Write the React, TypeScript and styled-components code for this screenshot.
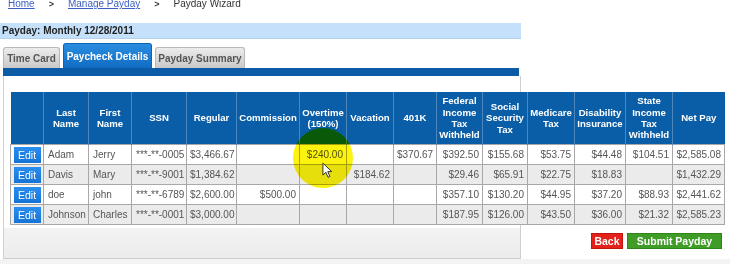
import React from "react";
import styled, { createGlobalStyle } from "styled-components";

const GlobalStyle = createGlobalStyle`
  html, body {
    margin: 0;
    padding: 0;
    background: #fff;
    font-family: "Liberation Sans", Arial, sans-serif;
  }
`;

type Row = {
  last: string;
  first: string;
  ssn: string;
  values: string[];
};

const columns = [
  { label: "", width: 33 },
  { label: "Last Name", width: 45 },
  { label: "First Name", width: 43 },
  { label: "SSN", width: 55 },
  { label: "Regular", width: 50 },
  { label: "Commission", width: 63 },
  { label: "Overtime (150%)", width: 47 },
  { label: "Vacation", width: 47 },
  { label: "401K", width: 43 },
  { label: "Federal Income Tax Withheld", width: 46 },
  { label: "Social Security Tax", width: 45 },
  { label: "Medicare Tax", width: 47 },
  { label: "Disability Insurance", width: 51 },
  { label: "State Income Tax Withheld", width: 47 },
  { label: "Net Pay", width: 52 },
];

const rows: Row[] = [
  {
    last: "Adam",
    first: "Jerry",
    ssn: "***-**-0005",
    values: ["$3,466.67", "", "$240.00", "", "$370.67", "$392.50", "$155.68", "$53.75", "$44.48", "$104.51", "$2,585.08"],
  },
  {
    last: "Davis",
    first: "Mary",
    ssn: "***-**-9001",
    values: ["$1,384.62", "", "", "$184.62", "", "$29.46", "$65.91", "$22.75", "$18.83", "", "$1,432.29"],
  },
  {
    last: "doe",
    first: "john",
    ssn: "***-**-6789",
    values: ["$2,600.00", "$500.00", "", "", "", "$357.10", "$130.20", "$44.95", "$37.20", "$88.93", "$2,441.62"],
  },
  {
    last: "Johnson",
    first: "Charles",
    ssn: "***-**-0001",
    values: ["$3,000.00", "", "", "", "", "$187.95", "$126.00", "$43.50", "$36.00", "$21.32", "$2,585.23"],
  },
];

const App = () => {
  return (
    <>
      <GlobalStyle />
      <Page>
        <Crumbs>
          <CrumbLink>Home</CrumbLink>
          <Arrow>&gt;</Arrow>
          <CrumbLink>Manage Payday</CrumbLink>
          <Arrow>&gt;</Arrow>
          <Current>Payday Wizard</Current>
        </Crumbs>

        <PaydayBar>Payday: Monthly 12/28/2011</PaydayBar>

        <Tabs>
          <Tab width={57}>Time Card</Tab>
          <Tab width={89} active>
            Paycheck Details
          </Tab>
          <Tab width={90}>Payday Summary</Tab>
        </Tabs>
        <TabLine />

        <Panel>
          <TableWrap>
            <Grid>
              <colgroup>
                {columns.map((c, i) => (
                  <col key={i} style={{ width: c.width }} />
                ))}
              </colgroup>
              <thead>
                <tr>
                  {columns.map((c, i) => (
                    <Th key={i}>{c.label}</Th>
                  ))}
                </tr>
              </thead>
              <tbody>
                {rows.map((r, i) => (
                  <Tr key={i} striped={i % 2 === 1}>
                    <EditCell>
                      <EditButton>Edit</EditButton>
                    </EditCell>
                    <Td>{r.last}</Td>
                    <Td>{r.first}</Td>
                    <Td>{r.ssn}</Td>
                    {r.values.map((v, j) => (
                      <Td key={j} money>
                        {v}
                      </Td>
                    ))}
                  </Tr>
                ))}
              </tbody>
            </Grid>
            <Highlight />
            <Cursor viewBox="0 0 12 18" width="11" height="17">
              <path
                d="M1 1 L1 14 L4.2 11 L6.6 16.4 L8.6 15.5 L6.3 10.2 L10.6 10.2 Z"
                fill="#fff"
                stroke="#222"
                strokeWidth="1"
                strokeLinejoin="round"
              />
            </Cursor>
          </TableWrap>

          <Footer>
            <ButtonRow>
              <BackButton>Back</BackButton>
              <SubmitButton>Submit Payday</SubmitButton>
            </ButtonRow>
          </Footer>
        </Panel>
        <BottomStrip />
      </Page>
    </>
  );
};

export default App;

const Page = styled.div`
  width: 730px;
  height: 264px;
  overflow: hidden;
  background: #fff;
  display: flex;
  flex-direction: column;
`;

const Crumbs = styled.div`
  display: flex;
  align-items: center;
  gap: 14px;
  height: 12px;
  margin-top: -2px;
  margin-bottom: 13px;
  padding-left: 8px;
  font-size: 10px;
  line-height: 12px;
  flex-shrink: 0;
`;

const CrumbLink = styled.span`
  color: #3c5fc4;
  text-decoration: underline;
`;

const Arrow = styled.span`
  color: #333;
  font-weight: bold;
  font-size: 9px;
`;

const Current = styled.span`
  color: #333;
`;

const PaydayBar = styled.div`
  width: 521px;
  height: 16px;
  padding-left: 2px;
  background: #c5e0fa;
  border-bottom: 1px solid #b4d2ee;
  color: #222;
  font-weight: bold;
  font-size: 10px;
  line-height: 16px;
  box-sizing: border-box;
  flex-shrink: 0;
`;

const Tabs = styled.div`
  display: flex;
  align-items: flex-end;
  gap: 3px;
  height: 25px;
  padding: 4px 0 0 3px;
  flex-shrink: 0;
`;

const Tab = styled.div<{ active?: boolean; width: number }>`
  width: ${(p) => p.width}px;
  height: ${(p) => (p.active ? "25px" : "21px")};
  display: flex;
  align-items: center;
  justify-content: center;
  white-space: nowrap;
  border-radius: 3px 3px 0 0;
  border: 1px solid ${(p) => (p.active ? "#0d64b4" : "#b8b8b8")};
  border-bottom: none;
  background: ${(p) =>
    p.active
      ? "linear-gradient(#2b8de0, #0f6cc4)"
      : "linear-gradient(#ececec, #c9c9c9)"};
  color: ${(p) => (p.active ? "#fff" : "#555")};
  font-size: 10px;
  font-weight: bold;
  box-sizing: border-box;
`;

const TabLine = styled.div`
  width: 516px;
  height: 8px;
  margin-left: 3px;
  background: #0b5ba6;
  flex-shrink: 0;
`;

const Panel = styled.div`
  width: 516px;
  margin-left: 3px;
  border-left: 1px solid #d2d2d2;
  border-right: 1px solid #cfcfcf;
  border-bottom: 1px solid #cdcdcd;
  background: #fff;
  flex-shrink: 0;
`;

const TableWrap = styled.div`
  position: relative;
  padding: 16px 0 0 6px;
  height: 136px;
`;

const Grid = styled.table`
  table-layout: fixed;
  border-collapse: collapse;
  width: 714px;
  font-size: 10px;
`;

const Th = styled.th`
  height: 52px;
  padding: 0 1px;
  background: #0a5ea8;
  color: #fff;
  font-weight: bold;
  font-size: 9.6px;
  line-height: 11.4px;
  text-align: center;
  border-left: 1px solid #4d86bd;
  &:first-child {
    border-left: none;
  }
`;

const Tr = styled.tr<{ striped?: boolean }>`
  height: 20px;
  background: ${(p) => (p.striped ? "#ebebeb" : "#fff")};
`;

const Td = styled.td<{ money?: boolean }>`
  padding: 0 ${(p) => (p.money ? "3px" : "4px")};
  border: 1px solid #a8a8a8;
  color: #555;
  text-align: ${(p) => (p.money ? "right" : "left")};
  white-space: nowrap;
  overflow: hidden;
  line-height: 17px;
`;

const EditCell = styled.td`
  padding: 1px 2px;
  border: 1px solid #a8a8a8;
  text-align: center;
  line-height: 0;
`;

const EditButton = styled.div`
  height: 16px;
  width: 27px;
  margin: 0 auto;
  background: linear-gradient(#2a8ff0, #1673d6);
  color: #fff;
  font-size: 10.5px;
  line-height: 16px;
  text-align: center;
`;

const Highlight = styled.div`
  position: absolute;
  left: 289px;
  top: 52px;
  width: 60px;
  height: 60px;
  border-radius: 50%;
  background: #fbf200;
  mix-blend-mode: multiply;
  opacity: 0.95;
  pointer-events: none;
`;

const Cursor = styled.svg`
  position: absolute;
  left: 318px;
  top: 86px;
`;

const Footer = styled.div`
  height: 30px;
  background: linear-gradient(#f3f3f3, #ececec);
`;

const ButtonRow = styled.div`
  width: 718px;
  display: flex;
  justify-content: flex-end;
  gap: 4px;
  padding-top: 5px;
`;

const BaseButton = styled.div`
  height: 16px;
  display: flex;
  align-items: center;
  justify-content: center;
  color: #fff;
  font-size: 10.5px;
  font-weight: bold;
  box-sizing: border-box;
`;

const BackButton = styled(BaseButton)`
  width: 32px;
  background: #e3221b;
  border: 1px solid #c21510;
`;

const SubmitButton = styled(BaseButton)`
  width: 95px;
  background: #3f9d27;
  border: 1px solid #2f8419;
`;

const BottomStrip = styled.div`
  flex: 1;
  background: #f3f3f3;
`;
